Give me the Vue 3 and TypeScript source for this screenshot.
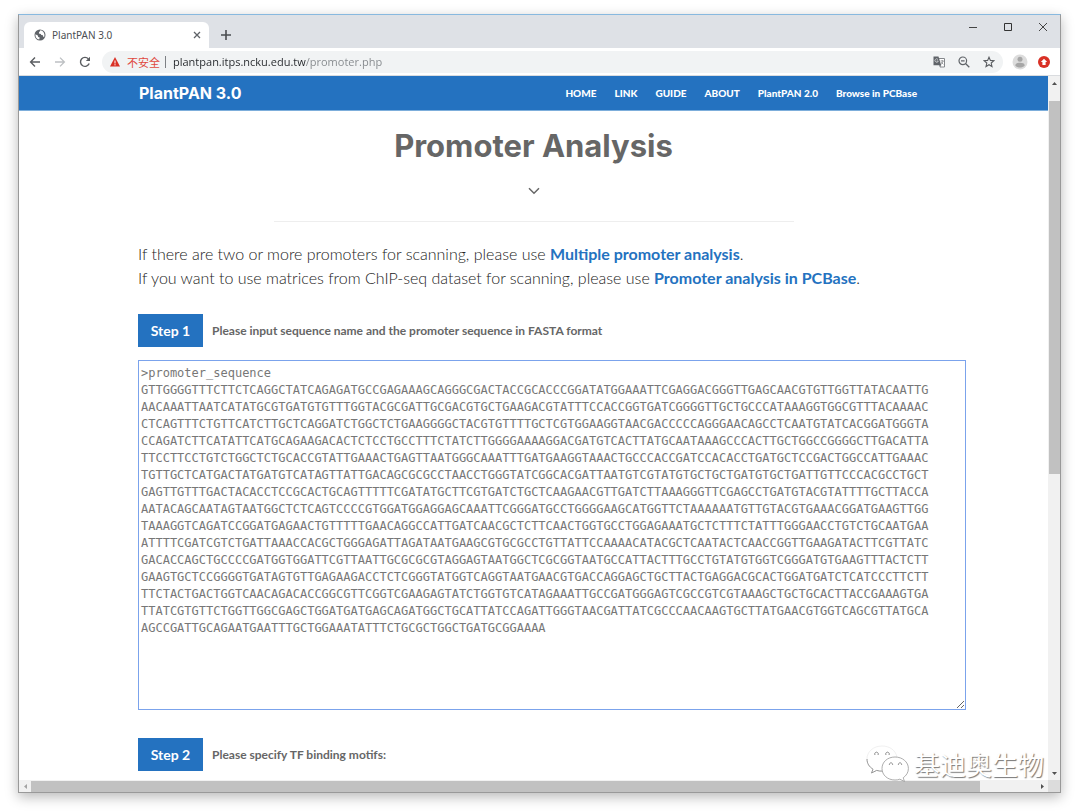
<script setup lang="ts">
import { ref } from 'vue'

interface NavItem {
  label: string
  href: string
}

const address = ref('plantpan.itps.ncku.edu.tw/promoter.php')

const navItems: NavItem[] = [
  { label: 'HOME', href: '#home' },
  { label: 'LINK', href: '#link' },
  { label: 'GUIDE', href: '#guide' },
  { label: 'ABOUT', href: '#about' },
  { label: 'PlantPAN 2.0', href: '#plantpan2' },
  { label: 'Browse in PCBase', href: '#pcbase' },
]

const sequence = ref(
  [
    '>promoter_sequence',
    'GTTGGGGTTTCTTCTCAGGCTATCAGAGATGCCGAGAAAGCAGGGCGACTACCGCACCCGGATATGGAAATTCGAGGACGGGTTGAGCAACGTGTTGGTTATACAATTG',
    'AACAAATTAATCATATGCGTGATGTGTTTGGTACGCGATTGCGACGTGCTGAAGACGTATTTCCACCGGTGATCGGGGTTGCTGCCCATAAAGGTGGCGTTTACAAAAC',
    'CTCAGTTTCTGTTCATCTTGCTCAGGATCTGGCTCTGAAGGGGCTACGTGTTTTGCTCGTGGAAGGTAACGACCCCCAGGGAACAGCCTCAATGTATCACGGATGGGTA',
    'CCAGATCTTCATATTCATGCAGAAGACACTCTCCTGCCTTTCTATCTTGGGGAAAAGGACGATGTCACTTATGCAATAAAGCCCACTTGCTGGCCGGGGCTTGACATTA',
    'TTCCTTCCTGTCTGGCTCTGCACCGTATTGAAACTGAGTTAATGGGCAAATTTGATGAAGGTAAACTGCCCACCGATCCACACCTGATGCTCCGACTGGCCATTGAAAC',
    'TGTTGCTCATGACTATGATGTCATAGTTATTGACAGCGCGCCTAACCTGGGTATCGGCACGATTAATGTCGTATGTGCTGCTGATGTGCTGATTGTTCCCACGCCTGCT',
    'GAGTTGTTTGACTACACCTCCGCACTGCAGTTTTTCGATATGCTTCGTGATCTGCTCAAGAACGTTGATCTTAAAGGGTTCGAGCCTGATGTACGTATTTTGCTTACCA',
    'AATACAGCAATAGTAATGGCTCTCAGTCCCCGTGGATGGAGGAGCAAATTCGGGATGCCTGGGGAAGCATGGTTCTAAAAAATGTTGTACGTGAAACGGATGAAGTTGG',
    'TAAAGGTCAGATCCGGATGAGAACTGTTTTTGAACAGGCCATTGATCAACGCTCTTCAACTGGTGCCTGGAGAAATGCTCTTTCTATTTGGGAACCTGTCTGCAATGAA',
    'ATTTTCGATCGTCTGATTAAACCACGCTGGGAGATTAGATAATGAAGCGTGCGCCTGTTATTCCAAAACATACGCTCAATACTCAACCGGTTGAAGATACTTCGTTATC',
    'GACACCAGCTGCCCCGATGGTGGATTCGTTAATTGCGCGCGTAGGAGTAATGGCTCGCGGTAATGCCATTACTTTGCCTGTATGTGGTCGGGATGTGAAGTTTACTCTT',
    'GAAGTGCTCCGGGGTGATAGTGTTGAGAAGACCTCTCGGGTATGGTCAGGTAATGAACGTGACCAGGAGCTGCTTACTGAGGACGCACTGGATGATCTCATCCCTTCTT',
    'TTCTACTGACTGGTCAACAGACACCGGCGTTCGGTCGAAGAGTATCTGGTGTCATAGAAATTGCCGATGGGAGTCGCCGTCGTAAAGCTGCTGCACTTACCGAAAGTGA',
    'TTATCGTGTTCTGGTTGGCGAGCTGGATGATGAGCAGATGGCTGCATTATCCAGATTGGGTAACGATTATCGCCCAACAAGTGCTTATGAACGTGGTCAGCGTTATGCA',
    'AGCCGATTGCAGAATGAATTTGCTGGAAATATTTCTGCGCTGGCTGATGCGGAAAA',
  ].join('\n'),
)
</script>

<template>
  <div class="desktop">
    <div class="window">
      <header class="tab-strip">
        <div class="tab">
          <svg class="globe" viewBox="0 0 12 12" aria-hidden="true">
            <circle cx="6" cy="6" r="5.5" fill="#5f6368" />
            <path d="M1.4 5.2 3.8 6.6 4.2 8 5.7 8.6 5.2 10.6C2.8 10.3 1.2 8 1.4 5.2ZM6.8 1.3C5.6 1.5 6.2 2.8 5.1 3.1L4.9 4.4 6.8 4.9 7.3 6.1 8.9 6.2 9.3 7.8 10.1 8.2C11.3 5.5 9.7 2.1 6.8 1.3Z" fill="#fff" />
          </svg>
          <span class="tab-title">PlantPAN 3.0</span>
          <button class="icon-button" type="button" aria-label="Close tab">
            <svg width="8" height="8" viewBox="0 0 8 8"><path d="m1 1 6 6M7 1 1 7" stroke="#5f6368" stroke-width="1.3" /></svg>
          </button>
        </div>
        <button class="icon-button new-tab" type="button" aria-label="New tab">
          <svg width="10" height="10" viewBox="0 0 10 10"><path d="M5 0v10M0 5h10" stroke="#4a4d51" stroke-width="1.6" /></svg>
        </button>
        <div class="window-controls">
          <button class="icon-button" type="button" aria-label="Minimize">
            <svg width="10" height="10" viewBox="0 0 10 10"><path d="M1 5.5h8" stroke="#444" /></svg>
          </button>
          <button class="icon-button" type="button" aria-label="Maximize">
            <svg width="10" height="10" viewBox="0 0 10 10"><path d="M1.5 1.5h7v7h-7z" fill="none" stroke="#333" /></svg>
          </button>
          <button class="icon-button" type="button" aria-label="Close window">
            <svg width="10" height="10" viewBox="0 0 10 10"><path d="m1 1 8 8M9 1 1 9" stroke="#444" /></svg>
          </button>
        </div>
      </header>

      <div class="toolbar">
        <button class="icon-button" type="button" aria-label="Back">
          <svg width="12" height="12" viewBox="0 0 12 12"><path d="M11 6H2M6 1.6 1.6 6 6 10.4" fill="none" stroke="#5a5d61" stroke-width="1.4" /></svg>
        </button>
        <button class="icon-button" type="button" aria-label="Forward" disabled>
          <svg width="12" height="12" viewBox="0 0 12 12"><path d="M1 6h9M6 1.6 10.4 6 6 10.4" fill="none" stroke="#bdc0c3" stroke-width="1.3" /></svg>
        </button>
        <button class="icon-button" type="button" aria-label="Reload">
          <svg width="12" height="12" viewBox="0 0 12 12">
            <path d="M10.2 7.5A4.5 4.5 0 1 1 9.4 2.9" fill="none" stroke="#5a5d61" stroke-width="1.4" />
            <path d="M11 .8V5H6.8Z" fill="#5a5d61" />
          </svg>
        </button>
        <div class="omnibox">
          <svg class="warning" viewBox="0 0 10 10" aria-hidden="true">
            <path d="M5 0 10 9.5H0Z" fill="#d93025" />
            <path d="M5 3.5v3M5 7.2v1.2" stroke="#fff" />
          </svg>
          <label class="security" for="address">不安全</label>
          <span class="divider"></span>
          <input id="address" v-model="address" class="address" type="text" spellcheck="false" />
          <button class="icon-button" type="button" aria-label="Translate this page">
            <svg width="12" height="12" viewBox="0 0 12 12">
              <path d="M5 2.5h6.5v8.5H7" fill="#fff" stroke="#85888c" />
              <path d="M.5.5h5l2.7 8.7H.5Z" fill="#5f6368" />
              <path d="M5 3.5A1.7 1.7 0 1 0 5.3 5H3.7" fill="none" stroke="#d8dadd" stroke-width=".8" />
              <path d="M7.5 5h3.3M9.2 4v1M10.2 5 8.3 8.4M8.3 6.2l2 2.1" fill="none" stroke="#74777b" stroke-width=".7" />
              <path d="M6 9.2h2.2L7 11.2Z" fill="#5f6368" />
            </svg>
          </button>
          <button class="icon-button" type="button" aria-label="Zoom">
            <svg width="12" height="12" viewBox="0 0 12 12"><circle cx="4.8" cy="4.8" r="3.8" fill="none" stroke="#5f6368" stroke-width="1.2" /><path d="M3 4.8h3.6M7.5 7.5 11.3 11.3" fill="none" stroke="#5f6368" stroke-width="1.3" /></svg>
          </button>
          <button class="icon-button" type="button" aria-label="Bookmark this page">
            <svg width="12" height="12" viewBox="0 0 12 12"><path d="m6 1.2 1.4 3.2 3.5.3-2.7 2.3.8 3.5L6 8.7 3 10.5 3.8 7 1.1 4.7l3.5-.3Z" fill="none" stroke="#5a5d61" stroke-width="1.1" /></svg>
          </button>
        </div>
        <button class="icon-button" type="button" aria-label="Profile">
          <svg width="16" height="16" viewBox="0 0 16 16"><circle cx="8" cy="8" r="7.5" fill="#dcdcdc" /><circle cx="8" cy="5.2" r="2.5" fill="#a6a6a6" /><path d="M3.4 11c0-3.1 9.2-3.1 9.2 0v.8c-2.4 2.4-6.8 2.4-9.2 0Z" fill="#a6a6a6" /></svg>
        </button>
        <button class="icon-button" type="button" aria-label="Update browser">
          <svg width="12" height="12" viewBox="0 0 12 12"><circle cx="6" cy="6" r="6" fill="#d93025" /><path d="m6 2.7 3.2 3.2H7.6V9H4.4V5.9H2.8Z" fill="#fff" /></svg>
        </button>
      </div>

      <div class="viewport">
        <div class="page">
          <nav class="site-nav">
            <a class="brand" href="#top">PlantPAN 3.0</a>
            <ul class="nav-list">
              <li v-for="item in navItems" :key="item.label">
                <a :href="item.href">{{ item.label }}</a>
              </li>
            </ul>
          </nav>

          <section class="heading">
            <h1>Promoter Analysis</h1>
            <svg class="chevron" viewBox="0 0 12 8" aria-hidden="true"><path d="m1 1.3 5 5 5-5" fill="none" stroke="#666" stroke-width="1.5" /></svg>
            <hr />
          </section>

          <main class="content">
            <p class="intro">
              If there are two or more promoters for scanning, please use <a href="#multiple">Multiple promoter analysis</a>.<br />
              If you want to use matrices from ChIP-seq dataset for scanning, please use <a href="#pcbase-analysis">Promoter analysis in PCBase</a>.
            </p>
            <div class="step">
              <span class="badge">Step 1</span>
              <label for="sequence">Please input sequence name and the promoter sequence in FASTA format</label>
            </div>
            <textarea id="sequence" v-model="sequence" spellcheck="false"></textarea>
            <div class="step">
              <span class="badge">Step 2</span>
              <span>Please specify TF binding motifs:</span>
            </div>
          </main>
        </div>

        <div class="scroll vertical">
          <button class="icon-button" type="button" aria-label="Scroll up"><svg width="5" height="3" viewBox="0 0 5 3"><path d="M0 3 2.5 0 5 3Z" fill="#505050" /></svg></button>
          <div class="track"><div class="thumb"></div></div>
          <button class="icon-button" type="button" aria-label="Scroll down"><svg width="5" height="3" viewBox="0 0 5 3"><path d="M0 0h5L2.5 3Z" fill="#505050" /></svg></button>
        </div>
        <div class="scroll horizontal">
          <button class="icon-button" type="button" aria-label="Scroll left"><svg width="3" height="5" viewBox="0 0 3 5"><path d="M3 0v5L0 2.5Z" fill="#a3a3a3" /></svg></button>
          <div class="track"><div class="thumb"></div></div>
          <button class="icon-button" type="button" aria-label="Scroll right"><svg width="3" height="5" viewBox="0 0 3 5"><path d="m0 0 3 2.5L0 5Z" fill="#505050" /></svg></button>
        </div>
        <div class="corner"></div>

        <div class="watermark">
          <svg width="44" height="38" viewBox="0 0 44 38" aria-hidden="true">
            <g fill="#fff" stroke-linejoin="round">
              <path d="M16 1C7.5 1 1 6.5 1 14c0 4.5 2.2 7.8 6 10.2L5.5 28l5.2-2.6c2 .6 4 .9 6.3.7 0-8 6-13.6 14-14C29.5 5 23.5 1 16 1Z" stroke="#e6e6e6" stroke-width=".6" />
              <path d="M1 14c0 4.5 2.2 7.8 6 10.2L5.5 28l5.2-2.6c2 .6 4 .9 6.3.7" fill="none" stroke="#999" />
              <path d="M29 12c-7.5 0-13 5-13 11.5S21.5 35 29 35c1.7 0 3.3-.2 4.8-.8l4.7 2.3-1.3-3.7c3.2-2.3 5.2-5.4 5.2-9.3C42.4 17 36.5 12 29 12Z" stroke="#999" stroke-width=".8" />
            </g>
            <path d="M9 10a1.8 1.8 0 1 1 3 0M20 10a1.8 1.8 0 1 1 3 0M23.5 20a1.6 1.6 0 1 1 3 0M32.500 20a1.600 1.600 0 1 1 3 0" fill="none" stroke="#8b8b8b" />
          </svg>
          <span>基迪奥生物</span>
        </div>
      </div>
    </div>
  </div>
</template>

<style>
body {
  margin: 0;
  background: #fff;
}
</style>

<style scoped>
* {
  box-sizing: border-box;
}

.desktop {
  display: flex;
  min-height: 100vh;
  padding: 14px 19px 19px 18px;
}

.window {
  flex: 1;
  min-width: 0;
  display: flex;
  flex-direction: column;
  border: 1px solid #999;
  border-top-color: #88b9df;
  background: #fff;
  box-shadow: 0 4px 12px rgba(0, 0, 0, 0.28);
}

.icon-button {
  display: flex;
  align-items: center;
  justify-content: center;
  padding: 0;
  border: 0;
  background: none;
}

.icon-button svg {
  display: block;
}

.tab-strip {
  display: flex;
  align-items: flex-end;
  height: 33px;
  background: #dee1e6;
}

.tab {
  display: flex;
  align-items: center;
  gap: 6px;
  width: 185px;
  height: 26px;
  margin-left: 5px;
  padding: 0 8px 0 10px;
  border-radius: 6px 6px 0 0;
  background: #fff;
}

.globe {
  width: 12px;
  height: 12px;
}

.tab-title {
  flex: 1;
  font: 10px "Noto Sans", sans-serif;
  color: #4b4e52;
}

.new-tab {
  width: 34px;
  height: 26px;
}

.window-controls {
  display: flex;
  align-self: flex-start;
  gap: 25px;
  margin-left: auto;
  padding: 7px 12px 0 0;
}

.toolbar {
  display: flex;
  align-items: center;
  gap: 13px;
  height: 28px;
  padding: 0 10px;
  border-bottom: 1px solid #dadcdf;
}

.omnibox {
  flex: 1;
  display: flex;
  align-items: center;
  gap: 13px;
  height: 22px;
  margin: 0 -4px 0 -2px;
  padding: 0 8px;
  border-radius: 11px;
  background: #f1f3f4;
}

.toolbar > .omnibox + .icon-button {
  margin-right: -3px;
}

.warning {
  width: 10px;
  height: 10px;
  margin-right: -6px;
}

.security {
  font: 11px "Noto Sans CJK SC", sans-serif;
  color: #e0483e;
}

.divider {
  width: 1px;
  height: 12px;
  margin: 0 -6px 0 -8px;
  background: #7d8084;
}

.address {
  flex: 1;
  min-width: 0;
  padding: 0;
  border: 0;
  outline: 0;
  font: 11px/18px "Open Sans", sans-serif;
  color: transparent;
  background: linear-gradient(to right, #25282c 133px, #83878b 133px);
  background-clip: text;
}

.viewport {
  position: relative;
  flex: 1;
  min-height: 0;
  display: grid;
  grid-template-columns: minmax(0, 1fr) 12px;
  grid-template-rows: minmax(0, 1fr) 12px;
}

.page {
  min-width: 0;
  overflow: hidden;
  color: #666;
  font-family: Lato, sans-serif;
}

.site-nav {
  display: flex;
  align-items: center;
  justify-content: space-between;
  height: 35px;
  padding: 0 131px 0 120px;
  border-bottom: 1px solid #7daedb;
  background: #2472c0;
}

.site-nav a {
  color: #fff;
  text-decoration: none;
}

.site-nav .brand {
  font: 700 16px Inter, sans-serif;
}

.nav-list {
  display: flex;
  gap: 18px;
  margin: 0;
  padding: 0;
  list-style: none;
  font-size: 10px;
  font-weight: 900;
  line-height: 12px;
}

.heading {
  display: flex;
  flex-direction: column;
  align-items: center;
}

h1 {
  margin: 16px 0 0;
  font: 700 31px/38px Inter, sans-serif;
}

.chevron {
  width: 12px;
  height: 8px;
  margin-top: 22px;
}

hr {
  width: 520px;
  max-width: 100%;
  height: 1px;
  margin: 26px 0 0;
  border: 0;
  background: #eee;
}

.content {
  display: flex;
  flex-direction: column;
  padding: 0 82px 0 119px;
}

.intro {
  margin: 20px 0 0;
  font-size: 16px;
  font-weight: 300;
  line-height: 24px;
  color: #222;
}

.intro a {
  font-weight: 700;
  color: #2472c0;
  text-decoration: none;
}

.step {
  display: flex;
  align-items: center;
  gap: 9px;
  margin-top: 24px;
  font-size: 12px;
  font-weight: 700;
}

.badge {
  width: 65px;
  font-size: 14px;
  line-height: 33px;
  text-align: center;
  color: #fff;
  background: #2472c0;
}

textarea {
  display: block;
  width: 100%;
  height: 350px;
  margin: 13px 0 4px;
  padding: 4px 2px;
  border: 1px solid #7ba3ec;
  outline: 0;
  white-space: pre;
  overflow: hidden;
  font: 12px/17px "DejaVu Sans Mono", monospace;
  color: #777;
}

.scroll {
  display: flex;
  background: #f1f1f1;
}

.scroll .icon-button {
  flex: none;
  width: 12px;
  height: 12px;
}

.track {
  flex: 1;
}

.thumb {
  background: #c1c1c1;
}

.vertical {
  flex-direction: column;
  padding: 1px 0;
}

.vertical .track {
  padding: 12px 0 0 1px;
}

.vertical .thumb {
  height: 56%;
}

.horizontal .track {
  padding-right: 6px;
}

.horizontal .thumb {
  width: 95%;
  height: 11px;
  margin-top: 1px;
}

.corner {
  background: #dcdcdc;
}

.watermark {
  position: absolute;
  right: 16px;
  bottom: 9px;
  display: flex;
  align-items: center;
  gap: 4px;
  font: 26px/38px "Noto Sans CJK SC", sans-serif;
  color: #fff;
  text-shadow: 1px 1px 1px #777;
}
</style>
